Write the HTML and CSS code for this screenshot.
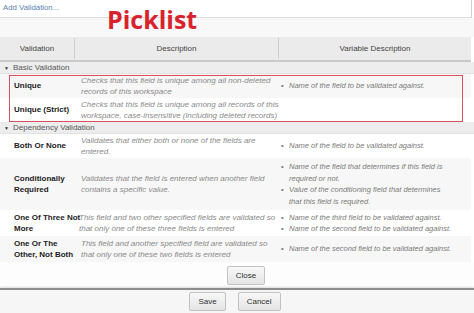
FILE: index.html
```html
<!DOCTYPE html>
<html lang="en">
<head>
    <meta charset="UTF-8">
    <title>Validation</title>
    <link rel="stylesheet" href="styles.css">
</head>
<body>
<div class="page">
    <div class="topbar"><a class="add-link" href="#">Add Validation...</a></div>
    <div class="gap"></div>

    <div class="grid head">
        <div class="th">Validation</div>
        <div class="th">Description</div>
        <div class="th">Variable Description</div>
    </div>

    <div class="group"><span class="caret">&#9660;</span>Basic Validation</div>
    <div class="grid row alt">
        <div class="name">Unique</div>
        <div class="desc">Checks that this field is unique among all non-deleted<br>records of this workspace</div>
        <ul class="vars"><li>Name of the field to be validated against.</li></ul>
    </div>
    <div class="grid row">
        <div class="name">Unique (Strict)</div>
        <div class="desc">Checks that this field is unique among all records of this<br>workspace, case-insensitive (including deleted records)</div>
        <ul class="vars"></ul>
    </div>

    <div class="group"><span class="caret">&#9660;</span>Dependency Validation</div>
    <div class="grid row">
        <div class="name">Both Or None</div>
        <div class="desc">Validates that either both or none of the fields are<br>entered.</div>
        <ul class="vars"><li>Name of the field to be validated against.</li></ul>
    </div>
    <div class="grid row tall alt">
        <div class="name">Conditionally<br>Required</div>
        <div class="desc">Validates that the field is entered when another field<br>contains a specific value.</div>
        <ul class="vars">
            <li>Name of the field that determines if this field is<br>required or not.</li>
            <li>Value of the conditioning field that determines<br>that this field is required.</li>
        </ul>
    </div>
    <div class="grid row mid">
        <div class="name">One Of Three Not<br>More</div>
        <div class="desc over">This field and two other specified fields are validated so<br>that only one of these three fields is entered</div>
        <ul class="vars">
            <li>Name of the third field to be validated against.</li>
            <li>Name of the second field to be validated against.</li>
        </ul>
    </div>
    <div class="grid row mid alt">
        <div class="name">One Or The<br>Other, Not Both</div>
        <div class="desc">This field and another specified field are validated so<br>that only one of these two fields is entered</div>
        <ul class="vars"><li>Name of the second field to be validated against.</li></ul>
    </div>

    <div class="close-bar"><button class="btn">Close</button></div>
    <div class="footer">
        <button class="btn">Save</button>
        <button class="btn">Cancel</button>
    </div>

    <!-- annotation over the screenshot -->
    <div class="mark"></div>
    <div class="label">Picklist</div>
</div>
</body>
</html>
```

FILE: styles.css
```css
* {
    margin: 0;
    padding: 0;
    box-sizing: border-box;
}

body {
    font-family: "Liberation Sans", Arial, sans-serif;
    font-size: 8px;
    color: #333;
    background: #fff;
}

.page {
    width: 474px;
    height: 313px;
    position: relative;
    overflow: hidden;
}

.topbar {
    width: 472px;
    height: 18px;
    border-bottom: 1px solid #dcdcdc;
    border-right: 1px solid #d0d0d0;
    padding: 3px 0 0 3px;
}

.add-link {
    color: #5b7fb0;
    text-decoration: none;
    font-size: 7.8px;
}

.gap {
    height: 19px;
    background: #f8f8f8;
}

.grid {
    display: grid;
    grid-template-columns: 74px 204px 193px;
    width: 471px;
}

.head {
    height: 25px;
    background: #ebebeb;
    border-bottom: 2px solid #c9c9c9;
}

.th {
    display: flex;
    align-items: center;
    justify-content: center;
    color: #444;
    border-left: 1px solid #cfcfcf;
    margin: 1px 0;
}

.th:first-child {
    border-left: none;
}

.group {
    height: 12px;
    background: #ededed;
    color: #555;
    display: flex;
    align-items: center;
    padding-left: 4px;
    border-bottom: 1px solid #e2e2e2;
}

.caret {
    font-size: 5px;
    width: 9px;
    color: #333;
}

.row {
    height: 24px;
    align-items: center;
}

.row.tall { height: 52px; }
.row.mid { height: 26px; }

.alt {
    background: #f7f7f7;
}

.name {
    font-weight: bold;
    color: #222;
    padding-left: 14px;
    line-height: 11.5px;
    white-space: nowrap;
}

.desc {
    font-style: italic;
    color: #8a8a8a;
    padding-left: 7px;
    line-height: 11.5px;
    white-space: nowrap;
}

.desc.over {
    padding-left: 5px;
}

.vars {
    list-style: none;
    font-style: italic;
    color: #7a7a7a;
    font-size: 7.5px;
    line-height: 11.5px;
    white-space: nowrap;
}

.vars li {
    position: relative;
    padding-left: 11px;
}

.vars li::before {
    content: "\2022";
    position: absolute;
    left: 3px;
    top: 0;
    color: #777;
    font-style: normal;
}

.close-bar {
    height: 26px;
    display: flex;
    justify-content: center;
    align-items: center;
    padding-left: 18px;
    background: #fdfdfd;
}

.footer {
    height: 25px;
    border-top: 2px solid #8c8c8c;
    box-shadow: 0 -1px 2px rgba(0, 0, 0, 0.15);
    background: #f6f6f6;
    display: flex;
    justify-content: center;
    align-items: center;
    gap: 12px;
    padding-right: 4px;
}

.btn {
    font-family: "Liberation Sans", Arial, sans-serif;
    font-size: 8px;
    color: #333;
    height: 19px;
    padding: 0 8px;
    border: 1px solid #c2c2c2;
    border-radius: 2px;
    background: linear-gradient(#f8f8f8, #e4e4e4);
}

.mark {
    position: absolute;
    left: 9px;
    top: 75px;
    width: 454px;
    height: 47px;
    border: 1px solid #d9505c;
}

.label {
    position: absolute;
    left: 107px;
    top: 2px;
    font-family: "Open Sans", sans-serif;
    font-weight: bold;
    font-size: 25px;
    color: #d8232e;
}
```
